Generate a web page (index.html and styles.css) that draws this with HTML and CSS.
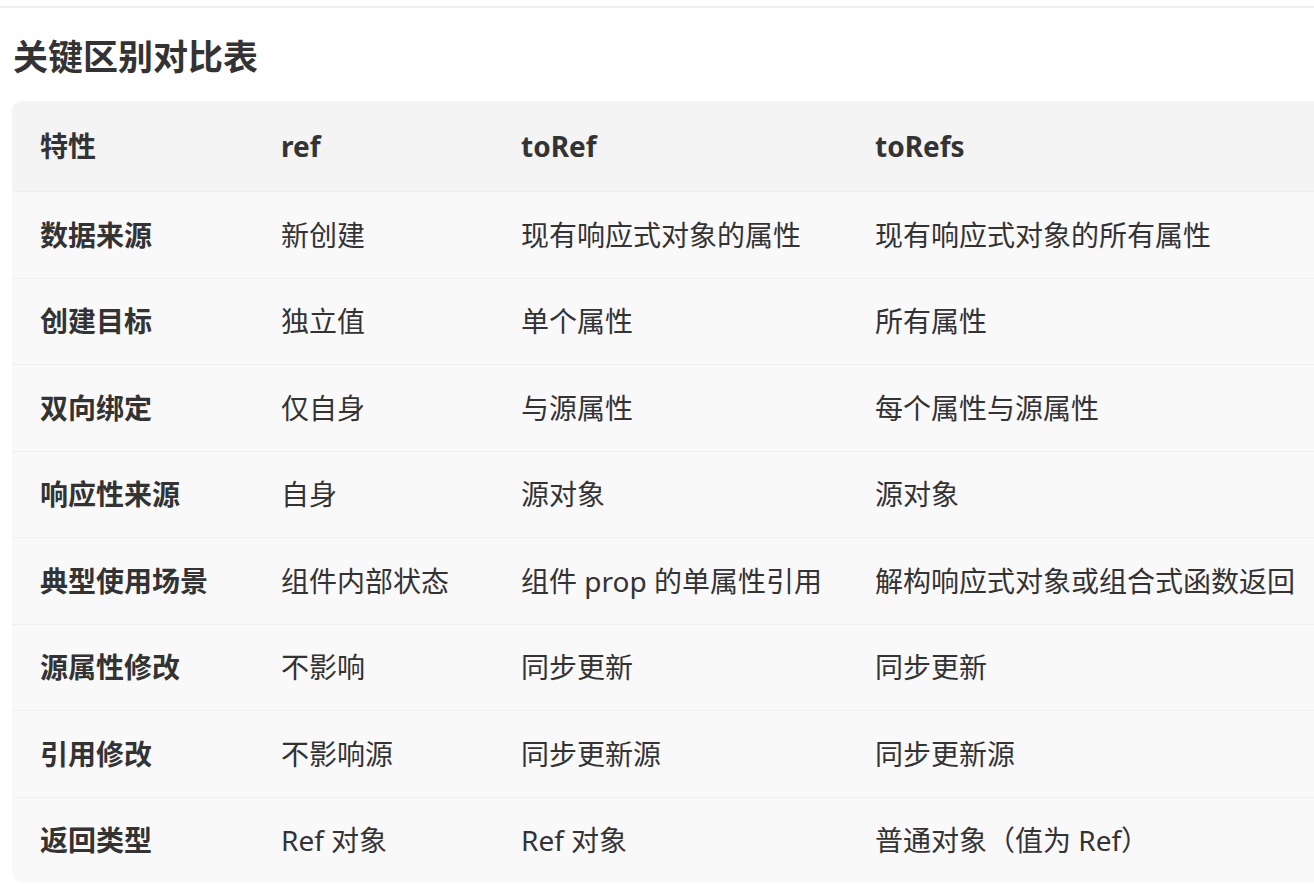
FILE: index.html
```html
<!DOCTYPE html>
<html lang="zh-CN">
<head>
<meta charset="utf-8">
<title>关键区别对比表</title>
<link rel="stylesheet" href="styles.css">
</head>
<body>
<div class="page">
  <div class="divider"></div>
  <h2 class="title">关键区别对比表</h2>
  <div class="table-wrap">
    <table class="compare">
      <colgroup>
        <col class="c1"><col class="c2"><col class="c3"><col class="c4">
      </colgroup>
      <thead>
        <tr><th>特性</th><th>ref</th><th>toRef</th><th>toRefs</th></tr>
      </thead>
      <tbody>
        <tr><td class="key">数据来源</td><td>新创建</td><td>现有响应式对象的属性</td><td>现有响应式对象的所有属性</td></tr>
        <tr><td class="key">创建目标</td><td>独立值</td><td>单个属性</td><td>所有属性</td></tr>
        <tr><td class="key">双向绑定</td><td>仅自身</td><td>与源属性</td><td>每个属性与源属性</td></tr>
        <tr><td class="key">响应性来源</td><td>自身</td><td>源对象</td><td>源对象</td></tr>
        <tr><td class="key">典型使用场景</td><td>组件内部状态</td><td>组件 prop 的单属性引用</td><td>解构响应式对象或组合式函数返回</td></tr>
        <tr><td class="key">源属性修改</td><td>不影响</td><td>同步更新</td><td>同步更新</td></tr>
        <tr><td class="key">引用修改</td><td>不影响源</td><td>同步更新源</td><td>同步更新源</td></tr>
        <tr><td class="key">返回类型</td><td>Ref 对象</td><td>Ref 对象</td><td>普通对象（值为 Ref）</td></tr>
      </tbody>
    </table>
  </div>
</div>
</body>
</html>
```

FILE: styles.css
```css
html, body {
  margin: 0;
  padding: 0;
  background: #ffffff;
  overflow: hidden;
}

.page {
  font-family: "Segoe UI", "Noto Sans", "Noto Sans CJK SC", sans-serif;
  color: #333333;
  padding-top: 6px;
}

.divider {
  height: 2px;
  background: #eeeeee;
}

.title {
  margin: 24px 0 23px 13px;
  padding: 0;
  font-size: 35px;
  line-height: 46px;
  font-weight: 700;
  color: #333333;
  font-family: "Noto Sans CJK SC", sans-serif;
}

.table-wrap {
  margin-left: 12px;
  overflow: hidden;
  border-radius: 10px 0 0 10px;
}

.compare {
  width: 1340px;
  table-layout: fixed;
  border-collapse: collapse;
  font-size: 28px;
  line-height: 42px;
}

.c1 { width: 241px; }
.c2 { width: 240px; }
.c3 { width: 354px; }
.c4 { width: 505px; }

.compare th {
  background: #f4f4f4;
  text-align: left;
  font-weight: 700;
  padding: 24px 28px;
  white-space: nowrap;
}

.compare td {
  background: #f9f9f9;
  border-top: 1px solid #efefef;
  padding: 21.75px 28px;
  white-space: nowrap;
  font-weight: 400;
}

.compare td.key {
  font-weight: 700;
}
```
